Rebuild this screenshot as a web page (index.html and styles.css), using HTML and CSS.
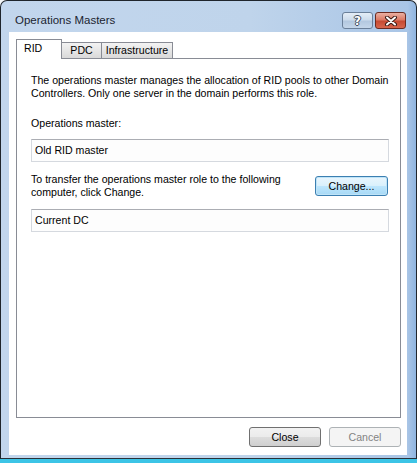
FILE: index.html
```html
<!DOCTYPE html>
<html>
<head>
<meta charset="utf-8">
<title>Operations Masters</title>
<link rel="stylesheet" href="styles.css">
</head>
<body>
<div class="screen">
  <div class="window">
    <div class="titlebar">
      <span class="title">Operations Masters</span>
      <div class="caption-buttons">
        <div class="cap help"><span class="qmark">?</span></div>
        <div class="cap close">
          <svg width="14" height="10" viewBox="0 0 14 10">
            <path d="M3 1.5 L11 8.5 M11 1.5 L3 8.5" stroke="#3a1a14" stroke-width="4" stroke-linecap="round"/>
            <path d="M3 1.5 L11 8.5 M11 1.5 L3 8.5" stroke="#ffffff" stroke-width="2" stroke-linecap="round"/>
          </svg>
        </div>
      </div>
    </div>
    <div class="client">
      <div class="tabs">
        <div class="tab selected">RID</div>
        <div class="tab">PDC</div>
        <div class="tab">Infrastructure</div>
      </div>
      <div class="panel">
        <p class="desc">The operations master manages the allocation of RID pools to other Domain<br>Controllers. Only one server in the domain performs this role.</p>
        <div class="label">Operations master:</div>
        <div class="field">Old RID master</div>
        <div class="transfer">
          <p class="desc">To transfer the operations master role to the following<br>computer, click Change.</p>
          <button class="btn default">Change...</button>
        </div>
        <div class="field field-second">Current DC</div>
      </div>
      <div class="actions">
        <button class="btn">Close</button>
        <button class="btn" disabled>Cancel</button>
      </div>
    </div>
  </div>
  <div class="taskbar"></div>
</div>
</body>
</html>
```

FILE: styles.css
```css
html, body {
  margin: 0;
  padding: 0;
  background: #ffffff;
}

body {
  font-family: "Liberation Sans", Arial, sans-serif;
  font-size: 10.6px;
  color: #000000;
}

.screen {
  width: 417px;
  height: 463px;
  display: flex;
  flex-direction: column;
  background: #f4f6f8;
}

.window {
  box-sizing: border-box;
  width: 417px;
  height: 459px;
  border: 1px solid #1f252c;
  border-bottom-color: #2a3038;
  border-radius: 7px 7px 0 0;
  background: linear-gradient(to right, #c2d6ed 0%, #bfd4eb 60%, #a9c5e6 98%, #8fb5e0 100%);
  padding: 0 9px 3px 8px;
  display: flex;
  flex-direction: column;
}

.titlebar {
  height: 31px;
  display: flex;
  align-items: flex-start;
  justify-content: space-between;
  padding: 11px 1px 0 6px;
  box-sizing: border-box;
}

.title {
  font-size: 11.5px;
  line-height: 14px;
  margin-top: 1px;
  color: #1b2430;
}

.caption-buttons {
  display: flex;
  gap: 2px;
}

.cap {
  box-sizing: border-box;
  width: 31px;
  height: 17px;
  border-radius: 3px;
  display: flex;
  align-items: center;
  justify-content: center;
}

.help {
  border: 1px solid #6a7f99;
  background: linear-gradient(to bottom, #e4edf7 0%, #cddcec 45%, #b3c8e0 55%, #c4d6ea 100%);
}

.qmark {
  font-family: "DejaVu Sans", sans-serif;
  font-weight: bold;
  font-size: 12px;
  line-height: 12px;
  color: #ffffff;
  text-shadow: 1px 0 0 #3d4b5c, -1px 0 0 #3d4b5c, 0 1px 0 #3d4b5c, 0 -1px 0 #3d4b5c;
}

.close {
  border: 1px solid #6b2a20;
  background: linear-gradient(to bottom, #eab0a2 0%, #dc7a66 45%, #c64a32 55%, #d7664d 100%);
}

.client {
  flex: 1;
  background: #ffffff;
  padding: 7px 6px 0 7px;
  display: flex;
  flex-direction: column;
}

.tabs {
  display: flex;
  align-items: flex-end;
  height: 19px;
  position: relative;
  z-index: 2;
}

.tab {
  box-sizing: border-box;
  height: 16px;
  border: 1px solid #898c95;
  border-bottom: none;
  background: linear-gradient(to bottom, #f3f3f3 0%, #e6e6e6 50%, #d9d9d9 100%);
  line-height: 15px;
  padding: 0;
  margin-left: -1px;
  color: #000;
  white-space: nowrap;
  text-align: center;
}

.tab:nth-child(2) {
  width: 41px;
}

.tab:nth-child(3) {
  width: 72px;
}

.tab.selected {
  margin-left: 0;
  width: 46px;
  height: 20px;
  margin-bottom: -1px;
  background: #ffffff;
  padding-left: 7px;
  text-align: left;
  line-height: 17px;
  position: relative;
  z-index: 3;
}

.panel {
  box-sizing: border-box;
  height: 360px;
  border: 1px solid #898c95;
  padding: 15px 11px 0 14px;
}

.desc {
  margin: 0;
  line-height: 13.3px;
  white-space: nowrap;
}

.label {
  margin-top: 16px;
  line-height: 13px;
}

.field {
  box-sizing: border-box;
  height: 23px;
  margin-top: 9px;
  border: 1px solid #d5d9df;
  border-top-color: #abadb3;
  background: #fdfdfd;
  padding-left: 3px;
  line-height: 21px;
}

.transfer {
  margin-top: 11px;
  display: flex;
  align-items: center;
  justify-content: space-between;
  padding-right: 1px;
}

.field-second {
  margin-top: 10px;
}

.btn {
  box-sizing: border-box;
  font-family: "Liberation Sans", Arial, sans-serif;
  font-size: 10.6px;
  height: 20px;
  width: 72px;
  padding: 0;
  border: 1px solid #707070;
  border-radius: 3px;
  background: linear-gradient(to bottom, #f2f2f2 0%, #ebebeb 50%, #dddddd 50%, #cfcfcf 100%);
  color: #000;
}

.btn.default {
  width: 73px;
  border-color: #3c7fb1;
  background: linear-gradient(to bottom, #eaf6fd 0%, #d9f0fc 50%, #bee6fd 50%, #a7d9f5 100%);
  box-shadow: inset 0 0 0 1px #bfe4f8;
}

.btn:disabled {
  border-color: #adb2b5;
  background: #f4f4f4;
  color: #838383;
}

.actions {
  display: flex;
  justify-content: flex-end;
  gap: 8px;
  margin-top: 9px;
}

.taskbar {
  height: 4px;
  background: #3cc4e6;
}
```
